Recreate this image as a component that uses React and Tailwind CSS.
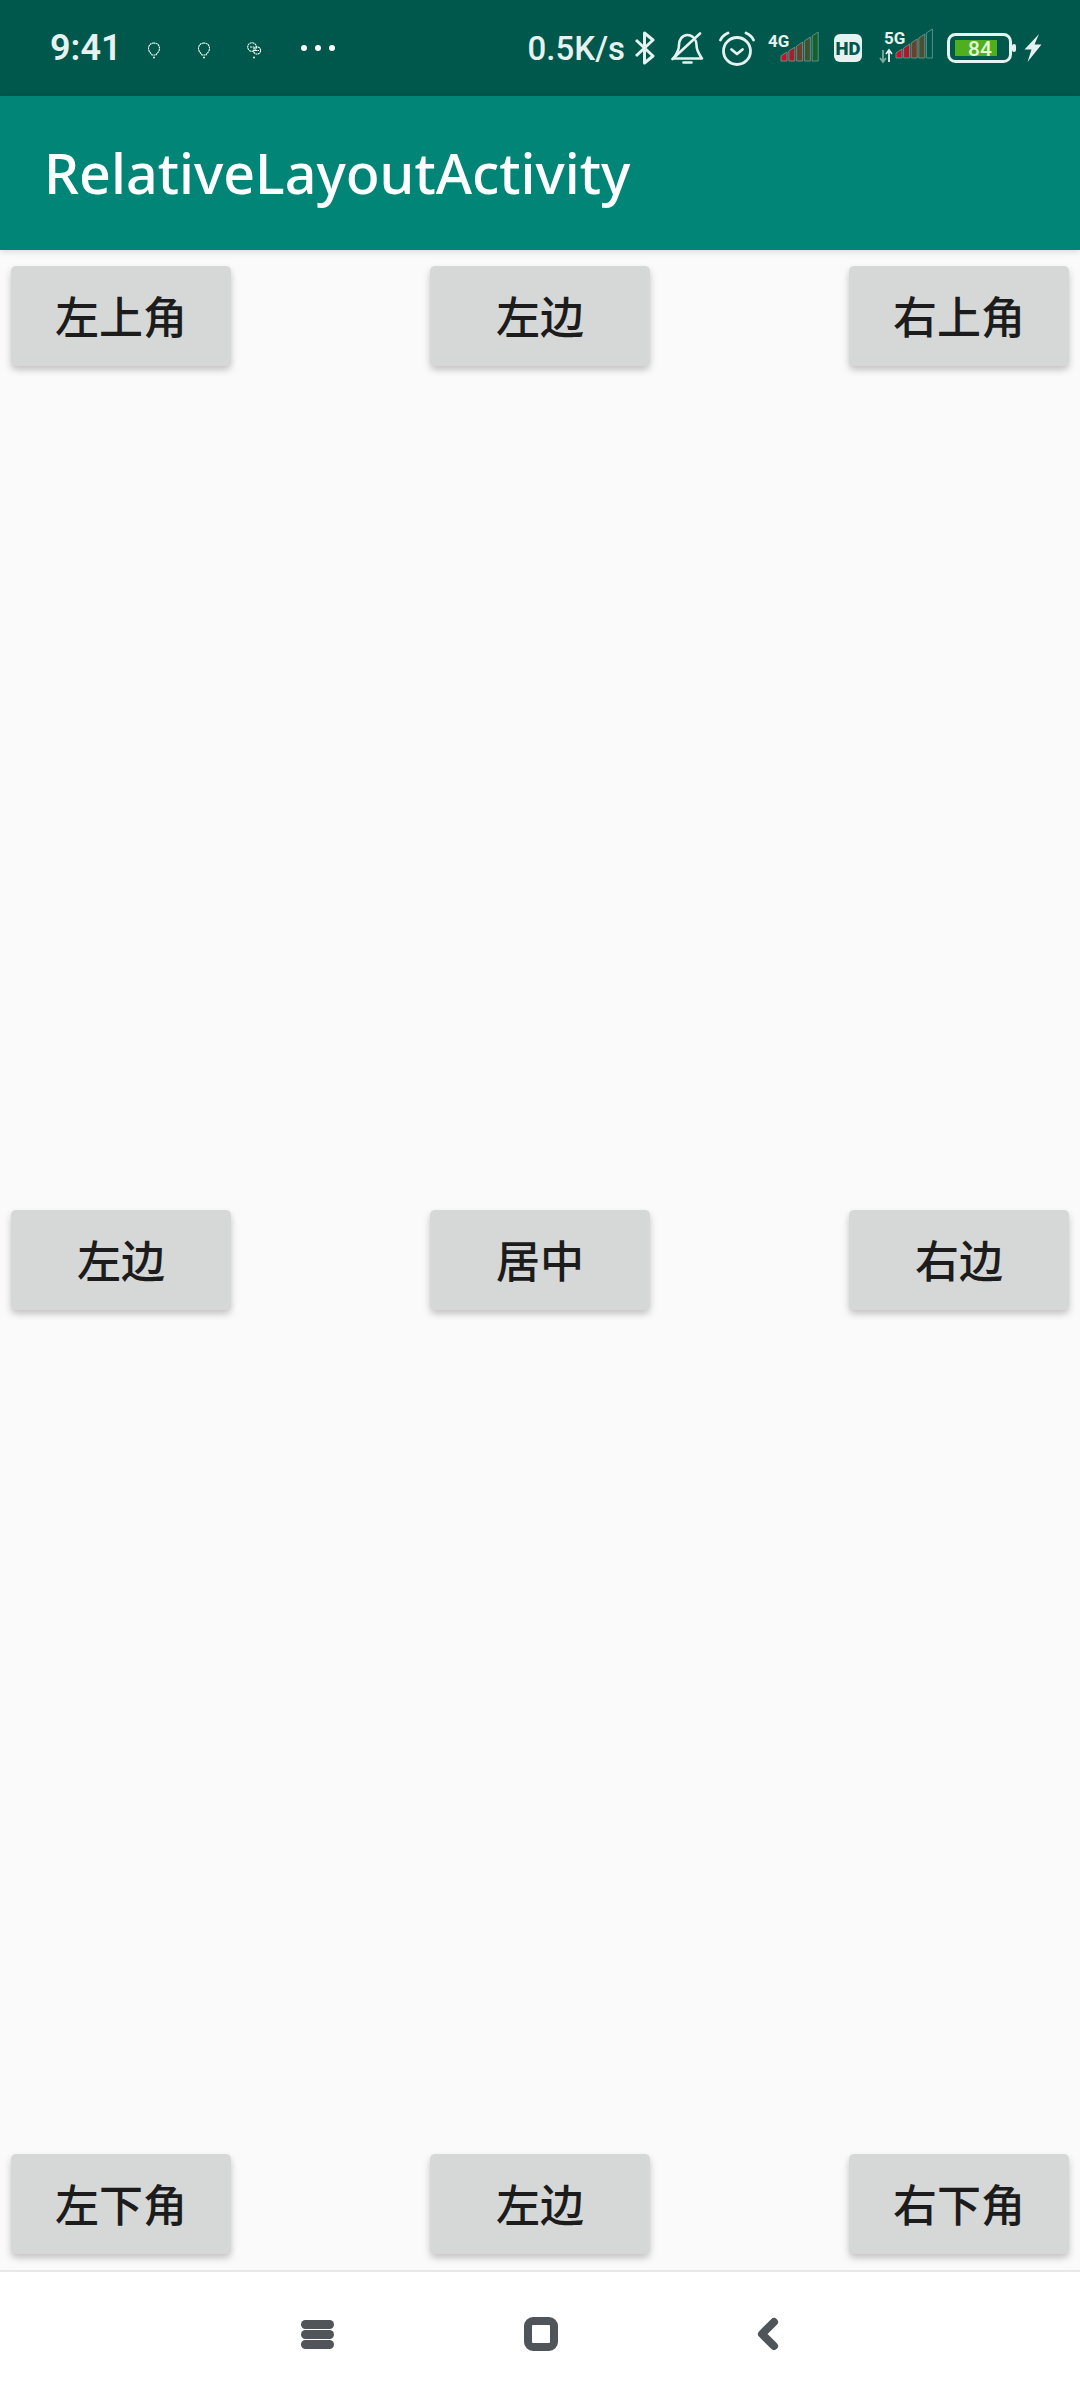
import React from "react";

const cjk = "font-['Roboto','Noto_Sans_CJK_SC',sans-serif]";

const Notice = ({ double }) => (
  <svg width="14" height="17" viewBox="0 0 14 17" fill="none" stroke="#ffffff" strokeWidth="1.100" strokeDasharray="2 0.500">
    {double ? (
      <>
        <circle cx="5" cy="5" r="4.300" />
        <circle cx="10" cy="8.500" r="3.600" />
        <path d="M3 5H7M8 8.500H12" />
      </>
    ) : (
      <path d="M7 1C3.500 1 1.500 3.500 1.500 6.500C1.500 9.500 4 11 5 13H9C10 11 12.500 9.500 12.500 6.500C12.500 3.500 10.500 1 7 1Z" />
    )}
    <circle cx="7" cy="15.500" r="1" fill="#dff5e0" stroke="none" />
  </svg>
);

const Bluetooth = () => (
  <svg width="21" height="34" viewBox="0 0 21 34" fill="none" stroke="#e6f2ef" strokeWidth="3" strokeLinejoin="round">
    <path d="M2 9L19 25L10.500 32V2L19 9L2 25" />
  </svg>
);

const BellOff = () => (
  <svg width="33" height="32" viewBox="0 0 33 32" fill="none" stroke="#e6f2ef" strokeWidth="2.600" strokeLinecap="round" strokeLinejoin="round">
    <path d="M22 5C20 3.500 18.500 3 16.500 3C11 3 8 8 8 13C8 19 5.500 22 2.500 26.500H31C28 22 25.500 19 25.500 13C25.500 11.500 25.300 10 24.500 8.500" />
    <path d="M1.500 27L29 1.500" />
    <path d="M12.500 30.500H20.500" />
  </svg>
);

const Alarm = () => (
  <svg width="36" height="35" viewBox="0 0 36 35" fill="none" stroke="#e6f2ef" strokeWidth="2.800" strokeLinecap="round" strokeLinejoin="round">
    <circle cx="18" cy="20" r="13.500" />
    <path d="M12.500 18.500L18 23L23.500 18.500" />
    <path d="M1.500 9C3 5.500 5.500 3.500 9 2" />
    <path d="M27 2C30.500 3.500 33 5.500 34.500 9" />
  </svg>
);

const FourG = () => {
  const bars = ["#c8102e", "#a81d2c", "#6d3f2c", "#3f5232", "#145f2e"];
  return (
    <svg width="52" height="43" viewBox="0 -6 52 43">
      <text x="0" y="13.500" fontSize="17" fontWeight="700" fill="#e6f2ef" fontFamily="Roboto, sans-serif">4G</text>
      {bars.map((color, i) => {
        const x = 13 + i * 7.8;
        const h = 7 + i * 5;
        return (
          <path
            key={i}
            d={`M${x} 28V${30 - h}L${x + 6} ${26 - h}V28Z`}
            fill={color}
            stroke="#6f9f94"
            strokeWidth="0.800"
          />
        );
      })}
    </svg>
  );
};

const FiveG = () => {
  const bars = ["#c8102e", "#b4152c", "#6d3f2c", "#4c4f33", "none"];
  return (
    <svg className="mb-[2px]" width="55" height="44" viewBox="0 -6 55 44">
      <text x="5" y="12.500" fontSize="17" fontWeight="700" fill="#e6f2ef" fontFamily="Roboto, sans-serif">5G</text>
      <path d="M4 19V31M1 27L4 31L7 27" stroke="#7fa89f" strokeWidth="1.800" fill="none" />
      <path d="M10 31V19M7 23L10 19L13 23" stroke="#e6f2ef" strokeWidth="1.800" fill="none" />
      {bars.map((color, i) => {
        const x = 17 + i * 7.6;
        const h = 7 + i * 5;
        return (
          <path
            key={i}
            d={`M${x} 27V${29 - h}L${x + 6} ${25 - h}V27Z`}
            fill={color}
            stroke="#6f9f94"
            strokeWidth="0.800"
          />
        );
      })}
    </svg>
  );
};

const Hd = () => (
  <svg width="28" height="28" viewBox="0 0 28 28">
    <rect width="28" height="28" rx="6" fill="#e6f2ef" />
    <text x="14" y="20.500" textAnchor="middle" fontSize="18.500" fontWeight="900" fill="#00574b" fontFamily="Roboto, sans-serif">HD</text>
  </svg>
);

const Battery = () => (
  <svg width="70" height="30" viewBox="0 0 70 30">
    <rect x="1.500" y="1.500" width="62" height="27" rx="7" fill="none" stroke="#e6f2ef" strokeWidth="3" />
    <rect x="8" y="7" width="42" height="16" fill="#4fb01f" />
    <rect x="65" y="11" width="4" height="8" rx="2" fill="#e6f2ef" />
    <text x="33" y="22.500" textAnchor="middle" fontSize="21" fontWeight="500" fill="#e4f5d8" fontFamily="Roboto, sans-serif">84</text>
  </svg>
);

const Bolt = () => (
  <svg width="18" height="28" viewBox="0 0 18 28">
    <path d="M15 0L0.500 15.500H7.500L3.500 28L17.500 10.500H10.500Z" fill="#e6f2ef" />
  </svg>
);

const StatusBar = () => (
  <div className="flex h-[96px] items-center bg-[#00574b] pl-[50px] pr-[38px] font-['Roboto',sans-serif] text-[#e6f2ef]">
    <span className="w-[68px] text-[36px] font-semibold leading-none">9:41</span>
    <div className="ml-[29px] mt-1 flex gap-[36px]">
      <Notice />
      <Notice />
      <Notice double />
    </div>
    <div className="ml-[40px] flex gap-2">
      <span className="h-[6px] w-[6px] rounded-full bg-white" />
      <span className="h-[6px] w-[6px] rounded-full bg-white" />
      <span className="h-[6px] w-[6px] rounded-full bg-white" />
    </div>
    <div className="ml-auto flex items-center">
      <span className="text-[33px] font-medium leading-none">0.5K/s</span>
      <div className="ml-[9px]"><Bluetooth /></div>
      <div className="ml-4"><BellOff /></div>
      <div className="ml-[15px]"><Alarm /></div>
      <div className="ml-[13px]"><FourG /></div>
      <div className="ml-[14px]"><Hd /></div>
      <div className="ml-[17px]"><FiveG /></div>
      <div className="ml-[13px]"><Battery /></div>
      <div className="ml-[7px]"><Bolt /></div>
    </div>
  </div>
);

const Btn = ({ children }) => (
  <button className={`flex h-[100px] w-[220px] items-center justify-center rounded-[5px] bg-[#d6d7d7] pt-[6px] text-[44px] font-medium leading-none text-[#1c1c1c] shadow-[0_4px_7px_rgba(0,0,0,0.22)] ${cjk}`}>
    {children}
  </button>
);

const Row = ({ labels }) => (
  <div className="flex justify-between px-[11px]">
    {labels.map((label, i) => (
      <Btn key={i}>{label}</Btn>
    ))}
  </div>
);

const NavBar = () => (
  <div className="flex h-[130px] items-center border-t-2 border-[#e8e8e8] bg-white pb-[4px]">
    <div className="ml-[301px] flex w-[33px] flex-col gap-[1px]">
      <span className="h-[9px] rounded-full bg-[#50555a]" />
      <span className="h-[9px] rounded-full bg-[#50555a]" />
      <span className="h-[9px] rounded-full bg-[#50555a]" />
    </div>
    <div className="ml-[190px] h-[34px] w-[34px] rounded-[9px] border-[8px] border-[#50555a]" />
    <svg className="ml-[199px]" width="22" height="34" viewBox="0 0 22 34" fill="none" stroke="#50555a" strokeWidth="8" strokeLinecap="round" strokeLinejoin="round">
      <path d="M17 5L5 17L17 29" />
    </svg>
  </div>
);

export default function App() {
  return (
    <div className="flex h-[2400px] w-[1080px] flex-col bg-[#fafafa]">
      <StatusBar />
      <div className="relative z-10 flex h-[154px] items-center bg-[#008577] pl-[44px] shadow-[0_2px_6px_rgba(0,0,0,0.12)]">
        <h1 className="font-['Noto_Sans',sans-serif] text-[55.500px] font-medium leading-none text-white">RelativeLayoutActivity</h1>
      </div>
      <main className="flex flex-1 flex-col justify-between py-4">
        <Row labels={["左上角", "左边", "右上角"]} />
        <Row labels={["左边", "居中", "右边"]} />
        <Row labels={["左下角", "左边", "右下角"]} />
      </main>
      <NavBar />
    </div>
  );
}
